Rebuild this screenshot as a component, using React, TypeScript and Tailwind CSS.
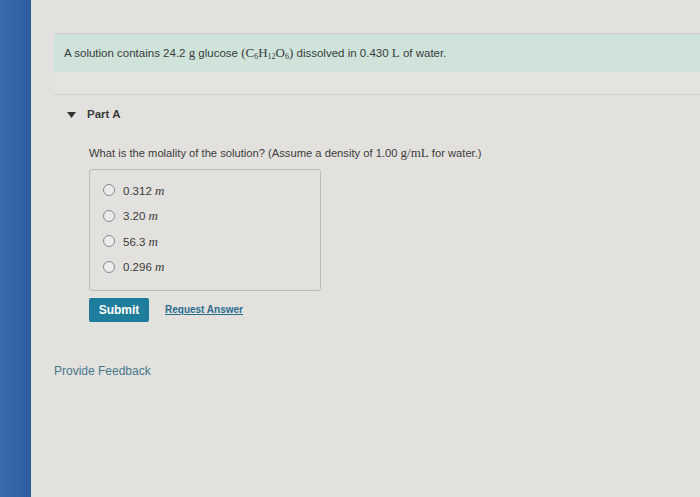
const options = ['0.312', '3.20', '56.3', '0.296']

const M = ({ children }: { children: React.ReactNode }) => (
  <span className="font-['Liberation_Serif','DejaVu_Serif',serif] text-[13px]">{children}</span>
)

const App = () => {
  return (
    <div className="flex h-[497px] w-[700px] overflow-hidden font-['Liberation_Sans',Arial,sans-serif] text-[#3b3b3b]">
      <div className="w-[31px] shrink-0 bg-gradient-to-r from-[#3a6cae] to-[#2e5d9f]" />
      <div className="flex-1 bg-[#e3e1de] pl-[23px] pt-[33px]">
        <div className="flex h-[39px] items-center border-t border-[#cfcdca] bg-[#cfe3db] pl-[10px] text-[11.5px]">
          <span>
            A solution contains 24.2 <M>g</M> glucose <M>(C<sub className="text-[8px]">6</sub>H<sub className="text-[8px]">12</sub>O<sub className="text-[8px]">6</sub>)</M> dissolved in 0.430 <M>L</M> of water.
          </span>
        </div>
        <div className="h-[22px] bg-[#e5e3e0]" />
        <div className="flex h-[40px] items-center gap-[11px] border-t border-[#cfcdca] pl-[13px] text-[11.5px] font-bold">
          <svg width="9" height="6" viewBox="0 0 9 6">
            <path d="M0 0 L9 0 L4.5 6 Z" fill="#333" />
          </svg>
          <span>Part A</span>
        </div>
        <div className="pl-[35px]">
          <p className="mt-[9px] text-[11.2px]">
            What is the molality of the solution? (Assume a density of 1.00 <M>g/mL</M> for water.)
          </p>
          <div className="mt-[6px] flex w-[232px] flex-col gap-[8px] rounded-[3px] border border-[#bdbbb8] pb-[14px] pl-[13px] pt-[12px]">
            {options.map((o) => (
              <label key={o} className="flex h-[17.5px] items-center gap-[8px] text-[11.5px]">
                <span className="h-[12px] w-[12px] rounded-full border border-[#8a8a8a] bg-[#eeece9]" />
                <span>
                  {o} <M><i>m</i></M>
                </span>
              </label>
            ))}
          </div>
          <div className="mt-[7px] flex items-center gap-[16px]">
            <button className="h-[24px] w-[60px] rounded-[2px] bg-[#1d7d9b] text-[12px] font-bold text-white">
              Submit
            </button>
            <span className="text-[10px] font-bold text-[#2b6c8c] underline">Request Answer</span>
          </div>
        </div>
        <p className="mt-[40px] text-[12px] text-[#47788a]">Provide Feedback</p>
      </div>
    </div>
  )
}

export default App
